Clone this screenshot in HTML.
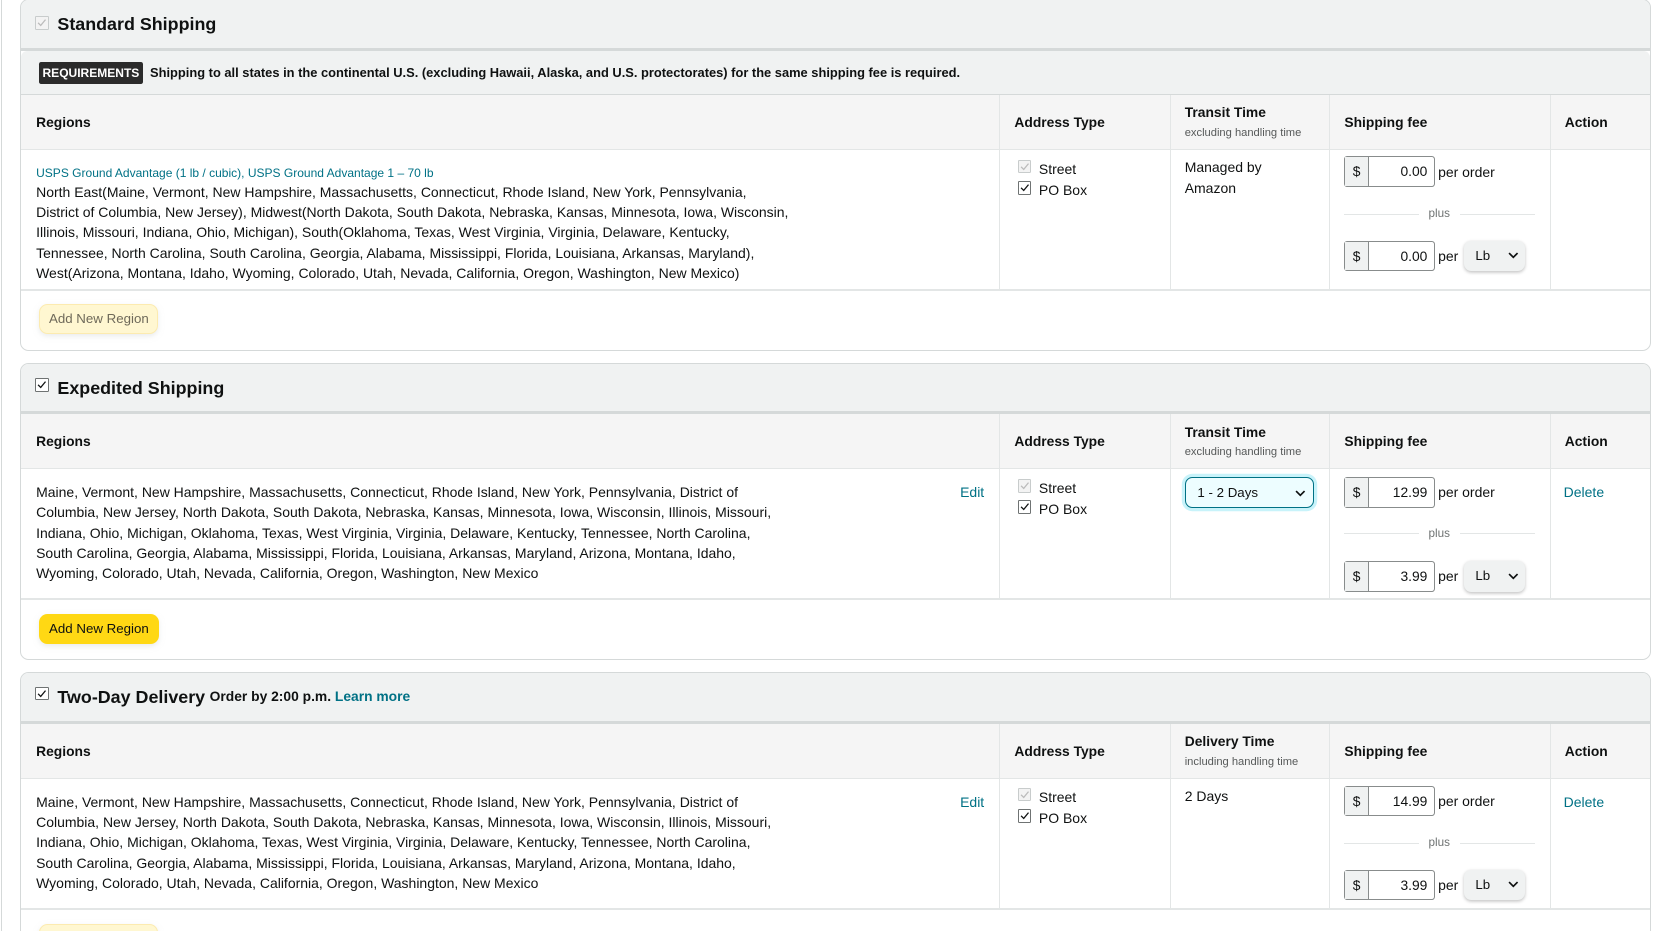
<!DOCTYPE html>
<html><head><meta charset="utf-8">
<style>
html,body{margin:0;padding:0;background:#fff;width:1669px;height:931px;overflow:hidden}
#w{zoom:1.0645;position:relative;width:1568px;height:875px;font-family:"Liberation Sans","DejaVu Sans",sans-serif;color:#0f1111}
.a{position:absolute}
.panel{position:absolute;left:19px;width:1530px;border:1px solid #d5d9d9;border-radius:8px;background:#fff;overflow:hidden}
.hdr{position:absolute;left:0;right:0;top:0;background:#f0f2f2;border-bottom:3px solid #d5d9d9}
.title{position:absolute;left:34px;font-size:16.8px;font-weight:bold}
.th{position:absolute;background:#f5f5f5;border-bottom:1px solid #e3e6e6;left:0;right:0}
.col{position:absolute;top:0;bottom:0;border-left:1px solid #e3e6e6}
.h{position:absolute;font-size:13px;font-weight:bold}
.sub{position:absolute;font-size:10.5px;color:#565959}
.txt{position:absolute;font-size:13.15px;line-height:19px;color:#0f1111;white-space:nowrap}
.cb{position:absolute;width:11px;height:11px;border:1px solid #6f7373;border-radius:1px;background:#fff}
.cb.dis{border-color:#c8cccc;background:#f3f3f3}
.cb svg{position:absolute;left:1px;top:1px}
.lnk{color:#007185}
.ig{position:absolute;width:83px;height:27px;border:1px solid #888c8c;border-radius:3px;background:#fff;font-size:13px}
.ig .d{position:absolute;left:0;top:0;width:21px;height:27px;background:#f0f2f2;border-right:1px solid #888c8c;text-align:center;line-height:27px}
.ig .v{position:absolute;right:6px;top:0;line-height:27px}
.sel{position:absolute;width:58px;height:29px;border-radius:7px;background:#f0f2f2;box-shadow:0 1px 3px rgba(15,17,17,.25);font-size:12.5px}
.plus{position:absolute;height:1px;background:#e3e6e6}
.btn{position:absolute;width:112px;height:28px;border-radius:8px;font-size:12.5px;text-align:center;line-height:28px;box-shadow:0 2px 5px rgba(213,217,217,.5)}
</style></head><body><div id="w">
<div class="a" style="left:1px;top:0;width:1px;height:875px;background:#d5d9d9"></div>

<!-- Panel 1 -->
<div class="panel" style="top:-1px;height:329px">
  <div class="hdr" style="height:45px"></div>
  <div class="cb dis" style="left:13px;top:15px"><svg width="9" height="9" viewBox="0 0 9 9"><path d="M1 4.5L3.5 7L8 1.5" stroke="#bbb" stroke-width="1.2" fill="none"/></svg></div>
  <div class="title" style="top:13px">Standard Shipping</div>
  <div class="a" style="left:0;right:0;top:48px;height:40px;background:#f0f2f2;border-bottom:1px solid #d5d9d9;border-radius:6px 6px 0 0"></div>
  <div class="a" style="left:17px;top:58px;height:21px;padding:0 3px;background:#2b2b2b;color:#fff;font-size:11.3px;font-weight:bold;line-height:21px;border-radius:2px">REQUIREMENTS</div>
  <div class="a" style="left:121px;top:61px;font-size:12.1px;font-weight:bold;white-space:nowrap">Shipping to all states in the continental U.S. (excluding Hawaii, Alaska, and U.S. protectorates) for the same shipping fee is required.</div>
  <div class="th" style="top:89px;height:51px">
    <div class="col" style="left:919px"></div><div class="col" style="left:1079px"></div><div class="col" style="left:1229px"></div><div class="col" style="left:1436px"></div>
    <div class="h" style="left:14px;top:18px">Regions</div>
    <div class="h" style="left:933px;top:18px">Address Type</div>
    <div class="h" style="left:1093px;top:9px">Transit Time</div>
    <div class="sub" style="left:1093px;top:30px">excluding handling time</div>
    <div class="h" style="left:1243px;top:18px">Shipping fee</div>
    <div class="h" style="left:1450px;top:18px">Action</div>
  </div>
  <div class="a" style="left:0;right:0;top:141px;height:131px;border-bottom:2px solid #e3e6e6">
    <div class="col" style="left:919px"></div><div class="col" style="left:1079px"></div><div class="col" style="left:1229px"></div><div class="col" style="left:1436px"></div>
  </div>
  <div class="txt lnk" style="left:14px;top:153px;font-size:11.3px">USPS Ground Advantage (1 lb / cubic), USPS Ground Advantage 1 – 70 lb</div>
  <div class="txt" style="left:14px;top:171px">North East(Maine, Vermont, New Hampshire, Massachusetts, Connecticut, Rhode Island, New York, Pennsylvania,<br>District of Columbia, New Jersey), Midwest(North Dakota, South Dakota, Nebraska, Kansas, Minnesota, Iowa, Wisconsin,<br>Illinois, Missouri, Indiana, Ohio, Michigan), South(Oklahoma, Texas, West Virginia, Virginia, Delaware, Kentucky,<br>Tennessee, North Carolina, South Carolina, Georgia, Alabama, Mississippi, Florida, Louisiana, Arkansas, Maryland),<br>West(Arizona, Montana, Idaho, Wyoming, Colorado, Utah, Nevada, California, Oregon, Washington, New Mexico)</div>
  <div class="cb dis" style="left:936px;top:150px"><svg width="9" height="9" viewBox="0 0 9 9"><path d="M1 4.5L3.5 7L8 1.5" stroke="#bbb" stroke-width="1.2" fill="none"/></svg></div>
  <div class="txt" style="left:956px;top:149px">Street</div>
  <div class="cb" style="left:936px;top:170px"><svg width="9" height="9" viewBox="0 0 9 9"><path d="M1 4.5L3.5 7L8 1.5" stroke="#0f1111" stroke-width="1.2" fill="none"/></svg></div>
  <div class="txt" style="left:956px;top:169px">PO Box</div>
  <div class="txt" style="left:1093px;top:148px">Managed by<br>Amazon</div>
  <div class="ig" style="left:1243px;top:147px"><div class="d">$</div><div class="v">0.00</div></div>
  <div class="txt" style="left:1331px;top:152px">per order</div>
  <div class="plus" style="left:1243px;top:201px;width:70px"></div><div class="plus" style="left:1352px;top:201px;width:70px"></div>
  <div class="txt" style="left:1322px;top:192px;font-size:11px;color:#6f7373">plus</div>
  <div class="ig" style="left:1243px;top:226px"><div class="d">$</div><div class="v">0.00</div></div>
  <div class="txt" style="left:1331px;top:231px">per</div>
  <div class="sel" style="left:1355px;top:226px"><span class="a" style="left:11px;top:7px">Lb</span><svg class="a" style="left:42px;top:11px" width="10" height="7" viewBox="0 0 10 7"><path d="M1 1L5 5L9 1" stroke="#0f1111" stroke-width="1.6" fill="none"/></svg></div>
  <div class="btn" style="left:17px;top:286px;background:#fff7d1;border:1px solid #fcebb0;color:#6f6a5a;width:110px;height:26px;line-height:26px">Add New Region</div>
</div>

<!-- Panel 2 -->
<div class="panel" style="top:341px;height:277px">
  <div class="hdr" style="height:44px"></div>
  <div class="cb" style="left:13px;top:13px"><svg width="9" height="9" viewBox="0 0 9 9"><path d="M1 4.5L3.5 7L8 1.5" stroke="#0f1111" stroke-width="1.2" fill="none"/></svg></div>
  <div class="title" style="top:13px">Expedited Shipping</div>
  <div class="th" style="top:47px;height:51px">
    <div class="col" style="left:919px"></div><div class="col" style="left:1079px"></div><div class="col" style="left:1229px"></div><div class="col" style="left:1436px"></div>
    <div class="h" style="left:14px;top:18px">Regions</div>
    <div class="h" style="left:933px;top:18px">Address Type</div>
    <div class="h" style="left:1093px;top:9px">Transit Time</div>
    <div class="sub" style="left:1093px;top:30px">excluding handling time</div>
    <div class="h" style="left:1243px;top:18px">Shipping fee</div>
    <div class="h" style="left:1450px;top:18px">Action</div>
  </div>
  <div class="a" style="left:0;right:0;top:99px;height:121px;border-bottom:2px solid #e3e6e6">
    <div class="col" style="left:919px"></div><div class="col" style="left:1079px"></div><div class="col" style="left:1229px"></div><div class="col" style="left:1436px"></div>
  </div>
  <div class="txt" style="left:14px;top:111px">Maine, Vermont, New Hampshire, Massachusetts, Connecticut, Rhode Island, New York, Pennsylvania, District of<br>Columbia, New Jersey, North Dakota, South Dakota, Nebraska, Kansas, Minnesota, Iowa, Wisconsin, Illinois, Missouri,<br>Indiana, Ohio, Michigan, Oklahoma, Texas, West Virginia, Virginia, Delaware, Kentucky, Tennessee, North Carolina,<br>South Carolina, Georgia, Alabama, Mississippi, Florida, Louisiana, Arkansas, Maryland, Arizona, Montana, Idaho,<br>Wyoming, Colorado, Utah, Nevada, California, Oregon, Washington, New Mexico</div>
  <div class="txt lnk" style="left:882px;top:111px">Edit</div>
  <div class="cb dis" style="left:936px;top:108px"><svg width="9" height="9" viewBox="0 0 9 9"><path d="M1 4.5L3.5 7L8 1.5" stroke="#bbb" stroke-width="1.2" fill="none"/></svg></div>
  <div class="txt" style="left:956px;top:107px">Street</div>
  <div class="cb" style="left:936px;top:128px"><svg width="9" height="9" viewBox="0 0 9 9"><path d="M1 4.5L3.5 7L8 1.5" stroke="#0f1111" stroke-width="1.2" fill="none"/></svg></div>
  <div class="txt" style="left:956px;top:127px">PO Box</div>
  <div class="a" style="left:1093px;top:106px;width:120px;height:27px;border:1px solid #007185;border-radius:7px;background:#edfdff;box-shadow:0 0 0 3px #c8f3fa;font-size:12.5px"><span class="a" style="left:11px;top:7px">1 - 2 Days</span><svg class="a" style="left:103px;top:11px" width="10" height="7" viewBox="0 0 10 7"><path d="M1 1L5 5L9 1" stroke="#0f1111" stroke-width="1.6" fill="none"/></svg></div>
  <div class="ig" style="left:1243px;top:106px"><div class="d">$</div><div class="v">12.99</div></div>
  <div class="txt" style="left:1331px;top:111px">per order</div>
  <div class="plus" style="left:1243px;top:159px;width:70px"></div><div class="plus" style="left:1352px;top:159px;width:70px"></div>
  <div class="txt" style="left:1322px;top:150px;font-size:11px;color:#6f7373">plus</div>
  <div class="ig" style="left:1243px;top:185px"><div class="d">$</div><div class="v">3.99</div></div>
  <div class="txt" style="left:1331px;top:190px">per</div>
  <div class="sel" style="left:1355px;top:185px"><span class="a" style="left:11px;top:7px">Lb</span><svg class="a" style="left:42px;top:11px" width="10" height="7" viewBox="0 0 10 7"><path d="M1 1L5 5L9 1" stroke="#0f1111" stroke-width="1.6" fill="none"/></svg></div>
  <div class="txt lnk" style="left:1449px;top:111px">Delete</div>
  <div class="btn" style="left:17px;top:235px;background:#ffd814;color:#0f1111">Add New Region</div>
</div>

<!-- Panel 3 -->
<div class="panel" style="top:631px;height:260px;border-bottom:none;border-radius:8px 8px 0 0">
  <div class="hdr" style="height:45px"></div>
  <div class="cb" style="left:13px;top:13px"><svg width="9" height="9" viewBox="0 0 9 9"><path d="M1 4.5L3.5 7L8 1.5" stroke="#0f1111" stroke-width="1.2" fill="none"/></svg></div>
  <div class="title" style="top:13px">Two-Day Delivery</div>
  <div class="a" style="left:177px;top:14px;font-size:13px;font-weight:bold">Order by 2:00 p.m. <span class="lnk">Learn more</span></div>
  <div class="th" style="top:48px;height:51px">
    <div class="col" style="left:919px"></div><div class="col" style="left:1079px"></div><div class="col" style="left:1229px"></div><div class="col" style="left:1436px"></div>
    <div class="h" style="left:14px;top:18px">Regions</div>
    <div class="h" style="left:933px;top:18px">Address Type</div>
    <div class="h" style="left:1093px;top:9px">Delivery Time</div>
    <div class="sub" style="left:1093px;top:30px">including handling time</div>
    <div class="h" style="left:1243px;top:18px">Shipping fee</div>
    <div class="h" style="left:1450px;top:18px">Action</div>
  </div>
  <div class="a" style="left:0;right:0;top:100px;height:121px;border-bottom:2px solid #e3e6e6">
    <div class="col" style="left:919px"></div><div class="col" style="left:1079px"></div><div class="col" style="left:1229px"></div><div class="col" style="left:1436px"></div>
  </div>
  <div class="txt" style="left:14px;top:112px">Maine, Vermont, New Hampshire, Massachusetts, Connecticut, Rhode Island, New York, Pennsylvania, District of<br>Columbia, New Jersey, North Dakota, South Dakota, Nebraska, Kansas, Minnesota, Iowa, Wisconsin, Illinois, Missouri,<br>Indiana, Ohio, Michigan, Oklahoma, Texas, West Virginia, Virginia, Delaware, Kentucky, Tennessee, North Carolina,<br>South Carolina, Georgia, Alabama, Mississippi, Florida, Louisiana, Arkansas, Maryland, Arizona, Montana, Idaho,<br>Wyoming, Colorado, Utah, Nevada, California, Oregon, Washington, New Mexico</div>
  <div class="txt lnk" style="left:882px;top:112px">Edit</div>
  <div class="cb dis" style="left:936px;top:108px"><svg width="9" height="9" viewBox="0 0 9 9"><path d="M1 4.5L3.5 7L8 1.5" stroke="#bbb" stroke-width="1.2" fill="none"/></svg></div>
  <div class="txt" style="left:956px;top:107px">Street</div>
  <div class="cb" style="left:936px;top:128px"><svg width="9" height="9" viewBox="0 0 9 9"><path d="M1 4.5L3.5 7L8 1.5" stroke="#0f1111" stroke-width="1.2" fill="none"/></svg></div>
  <div class="txt" style="left:956px;top:127px">PO Box</div>
  <div class="txt" style="left:1093px;top:106px">2 Days</div>
  <div class="ig" style="left:1243px;top:106px"><div class="d">$</div><div class="v">14.99</div></div>
  <div class="txt" style="left:1331px;top:111px">per order</div>
  <div class="plus" style="left:1243px;top:160px;width:70px"></div><div class="plus" style="left:1352px;top:160px;width:70px"></div>
  <div class="txt" style="left:1322px;top:151px;font-size:11px;color:#6f7373">plus</div>
  <div class="ig" style="left:1243px;top:185px"><div class="d">$</div><div class="v">3.99</div></div>
  <div class="txt" style="left:1331px;top:190px">per</div>
  <div class="sel" style="left:1355px;top:185px"><span class="a" style="left:11px;top:7px">Lb</span><svg class="a" style="left:42px;top:11px" width="10" height="7" viewBox="0 0 10 7"><path d="M1 1L5 5L9 1" stroke="#0f1111" stroke-width="1.6" fill="none"/></svg></div>
  <div class="txt lnk" style="left:1449px;top:112px">Delete</div>
  <div class="btn" style="left:17px;top:236px;background:#fff7d1;border:1px solid #fcebb0;width:110px;height:26px"></div>
</div>
</div></body></html>
